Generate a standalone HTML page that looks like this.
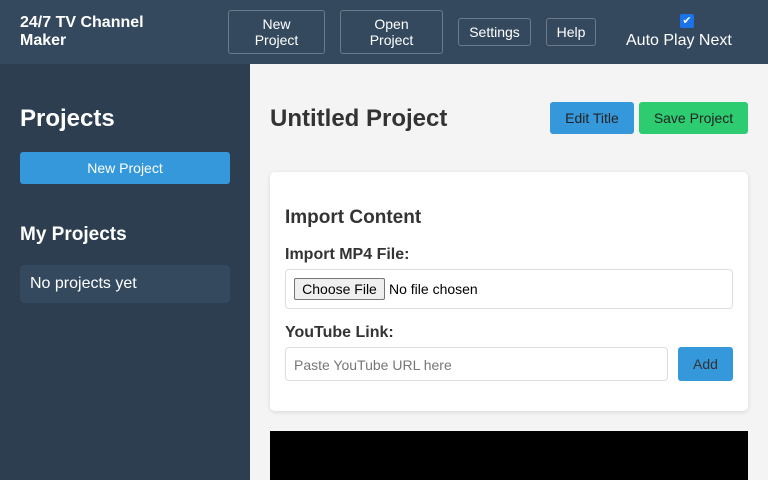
<!DOCTYPE html>
<html><head><style>
*{box-sizing:border-box;margin:0;padding:0}
body{width:768px;height:480px;overflow:hidden;font-family:"Liberation Sans",sans-serif;background:#f4f4f4;position:relative;color:#333}
.a{position:absolute}
.hdr{left:0;top:0;width:768px;height:64px;background:#34495e}
.hb{position:absolute;border:1px solid #6c7a89;border-radius:3px;color:#fff;font-size:14px;text-align:center;line-height:16px;display:flex;align-items:center;justify-content:center;background:#34495e}
.side{left:0;top:64px;width:250px;height:416px;background:#2c3e50;color:#fff}
.btn{position:absolute;border-radius:3px;color:#fff;font-size:14px;display:flex;align-items:center;justify-content:center}
</style></head><body>
<div class="a hdr">
<div class="a" style="left:20px;top:14px;color:#fff;font-weight:bold;font-size:16px;line-height:18px">24/7 TV Channel<br>Maker</div>
<div class="hb" style="left:228px;top:10px;width:97px;height:44px">New<br>Project</div>
<div class="hb" style="left:340px;top:10px;width:103px;height:44px">Open<br>Project</div>
<div class="hb" style="left:458px;top:18px;width:73px;height:28px">Settings</div>
<div class="hb" style="left:546px;top:18px;width:50px;height:28px">Help</div>
<div class="a" style="left:680px;top:14px;width:14px;height:14px;background:#1a73e8;border-radius:2px;color:#fff;font-size:11px;text-align:center;line-height:14px">✔</div>
<div class="a" style="left:626px;top:32px;color:#fff;font-size:16px">Auto Play Next</div>
</div>
<div class="a side">
<div class="a" style="left:20px;top:41px;font-size:24px;font-weight:bold">Projects</div>
<div class="btn" style="left:20px;top:88px;width:210px;height:32px;background:#3498db">New Project</div>
<div class="a" style="left:20px;top:160px;font-size:19px;font-weight:bold">My Projects</div>
<div class="a" style="left:20px;top:201px;width:210px;height:38px;background:#34495e;border-radius:4px;font-size:16px;padding:10px">No projects yet</div>
</div>
<div class="a" style="left:270px;top:105px;font-size:24px;font-weight:bold">Untitled Project</div>
<div class="btn" style="left:550px;top:102px;width:84px;height:32px;background:#3498db;color:#222">Edit Title</div>
<div class="btn" style="left:639px;top:102px;width:109px;height:32px;background:#2ecc71;color:#222">Save Project</div>
<div class="a" style="left:270px;top:172px;width:478px;height:239px;background:#fff;border-radius:5px;box-shadow:0 1px 4px rgba(0,0,0,.12)">
<div class="a" style="left:15px;top:35px;font-size:19px;font-weight:bold">Import Content</div>
<div class="a" style="left:15px;top:74px;font-size:16px;font-weight:bold">Import MP4 File:</div>
<div class="a" style="left:15px;top:97px;width:448px;height:40px;border:1px solid #ddd;border-radius:4px">
<div class="a" style="left:8px;top:8px;width:91px;height:22px;border:1px solid #767676;border-radius:2px;background:#efefef;font-size:14px;text-align:center;line-height:20px;color:#000">Choose File</div>
<div class="a" style="left:103px;top:11px;font-size:14px;color:#000">No file chosen</div></div>
<div class="a" style="left:15px;top:152px;font-size:16px;font-weight:bold">YouTube Link:</div>
<div class="a" style="left:15px;top:175px;width:383px;height:34px;border:1px solid #ddd;border-radius:4px;font-size:14px;color:#777;padding:9px 8px">Paste YouTube URL here</div>
<div class="btn" style="left:408px;top:175px;width:55px;height:34px;background:#3498db;color:#333">Add</div>
</div>
<div class="a" style="left:270px;top:431px;width:478px;height:49px;background:#000"></div>
</body></html>
